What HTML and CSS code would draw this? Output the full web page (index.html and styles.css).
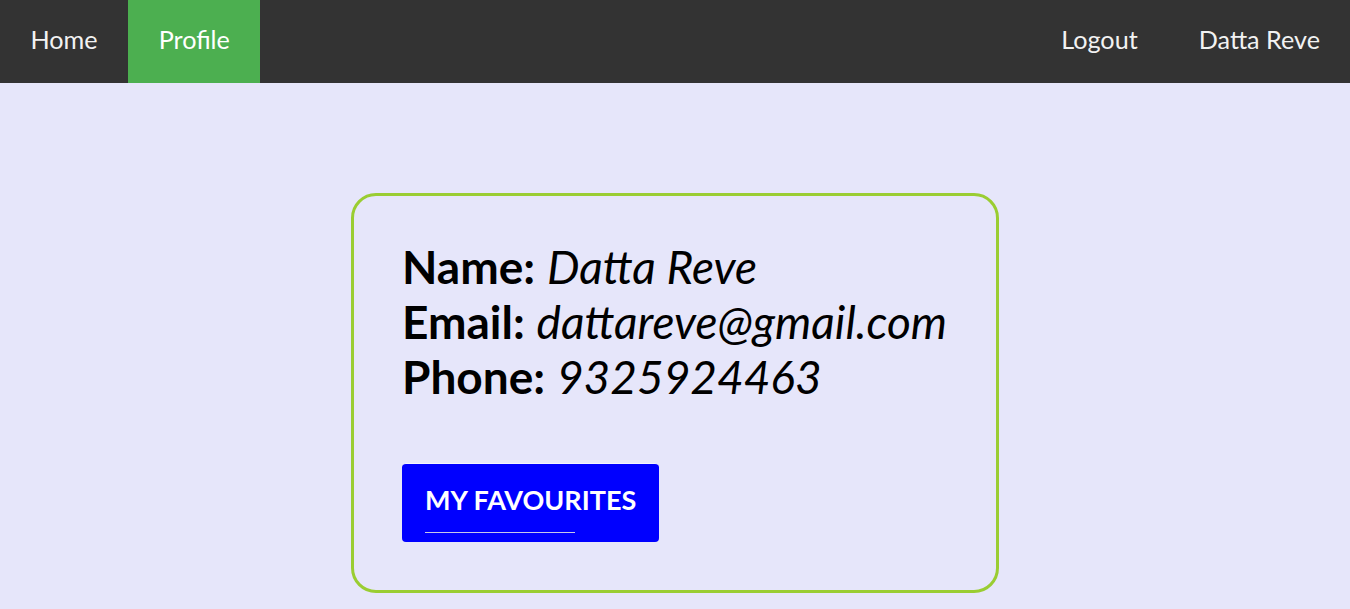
FILE: index.html
```html
<!DOCTYPE html>
<html lang="en">
<head>
  <meta charset="UTF-8" />
  <title>Profile</title>
  <link rel="stylesheet" href="styles.css">
</head>
<body>

<nav class="topnav">
  <div class="nav-left">
    <a href="#" class="nav-link">Home</a>
    <a href="#" class="nav-link active">Profile</a>
  </div>
  <div class="nav-right">
    <a href="#" class="nav-link">Logout</a>
    <a href="#" class="nav-link">Datta Reve</a>
  </div>
</nav>

<main class="page">
  <section class="profile-card">
    <div class="details">
      <div class="row"><b>Name:</b> <i>Datta Reve</i></div>
      <div class="row"><b>Email:</b> <i>dattareve@gmail.com</i></div>
      <div class="row"><b>Phone:</b> <i>9325924463</i></div>
    </div>
    <button class="fav-btn">
      <span>MY FAVOURITES</span>
      <span class="fav-line"></span>
    </button>
  </section>
</main>

</body>
</html>
```

FILE: styles.css
```css
body {
  margin: 0;
  padding: 0;
  font-family: Lato, 'Open Sans', sans-serif;
  background: #e6e6fa;
  color: #000;
}
.topnav {
  background: #333;
  height: 83px;
  display: flex;
  justify-content: space-between;
}
.nav-left, .nav-right {
  display: flex;
}
.nav-link {
  color: #f2f2f2;
  text-decoration: none;
  font-size: 25.2px;
  padding: 0 30.5px 0 30.5px;
  line-height: 79px;
}
.nav-right .nav-link {
  padding: 0 30px 0 31px;
}
.nav-link.active {
  background: #4caf50;
  color: #fff;
}
.page {
  display: flex;
  justify-content: center;
  padding-top: 110px;
}
.profile-card {
  width: 546px;
  border: 3px solid #9acd32;
  border-radius: 25px;
  padding: 43px 48px 48px;
}
.details {
  font-size: 46px;
  line-height: 55px;
}
.fav-btn {
  margin-top: 59px;
  background: #0000ff;
  color: #fff;
  border: none;
  border-top: 1px solid #f4f4ff;
  border-radius: 4px;
  font-family: Lato, sans-serif;
  font-weight: 700;
  font-size: 27px;
  padding: 19px 23px 9px;
  display: flex;
  flex-direction: column;
  align-items: flex-start;
  cursor: pointer;
}
.fav-line {
  display: block;
  width: 150px;
  margin-top: 16px;
  border-bottom: 1px solid #c8c8e8;
}
```
